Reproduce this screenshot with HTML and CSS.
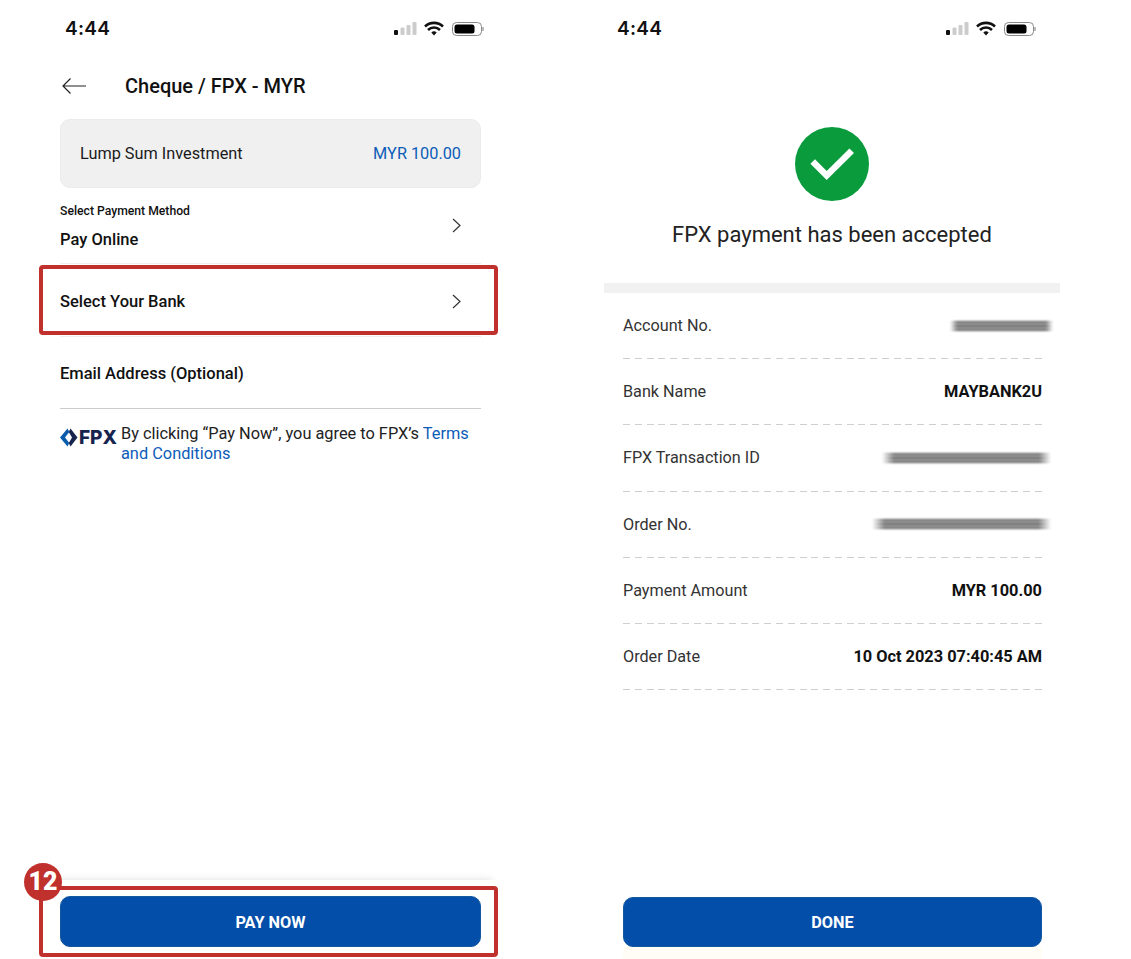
FILE: index.html
```html
<!DOCTYPE html>
<html lang="en">
<head>
  <meta charset="UTF-8">
  <title>FPX payment steps</title>
  <link rel="stylesheet" href="styles.css">
</head>
<body>

  <div class="container">

    <!-- Left phone: payment form -->
    <div class="phone">
      <div class="status-bar">
        <span class="time">4:44</span>
        <svg class="status-icons" width="90" height="18" viewBox="0 0 90 18">
          <rect x="0" y="10" width="4" height="5" rx="1" fill="#111"/>
          <rect x="6.500" y="7.500" width="4" height="7.500" rx="1" fill="#ccc"/>
          <rect x="12.500" y="5" width="4" height="10" rx="1" fill="#ccc"/>
          <rect x="18.500" y="2" width="4" height="13" rx="1" fill="#ccc"/>
          <path d="M31 6.500a13 13 0 0 1 18 0M34 10a8.600 8.600 0 0 1 12 0" fill="none" stroke="#111" stroke-width="2.600"/>
          <path d="M37.300 12.600a4 4 0 0 1 5.400 0L40 15.500z" fill="#111"/>
          <rect x="58.500" y="2.500" width="29" height="13" rx="4" fill="none" stroke="#888" stroke-width="1"/>
          <rect x="60.500" y="4.500" width="20" height="9" rx="2.500" fill="#000"/>
          <path d="M89 7v4" stroke="#999" stroke-width="1.300"/>
        </svg>
      </div>

      <div class="page-head">
        <svg class="back" width="26" height="18" viewBox="0 0 26 18">
          <path d="M25 9H2M9.500 1.500 2 9l7.500 7.500" fill="none" stroke="#222" stroke-width="1.200"/>
        </svg>
        <h1>Cheque / FPX - MYR</h1>
      </div>

      <div class="summary">
        <span>Lump Sum Investment</span>
        <span class="link">MYR 100.00</span>
      </div>

      <div class="field method">
        <div>
          <div class="small-label">Select Payment Method</div>
          <div class="field-name">Pay Online</div>
        </div>
        <svg class="chevron" width="9" height="15" viewBox="0 0 9 15"><path d="M1 1l7 6.500-7 6.500" fill="none" stroke="#333" stroke-width="1.200"/></svg>
      </div>

      <div class="field bank highlight">
        <div class="field-name">Select Your Bank</div>
        <svg class="chevron" width="9" height="15" viewBox="0 0 9 15"><path d="M1 1l7 6.500-7 6.500" fill="none" stroke="#333" stroke-width="1.200"/></svg>
      </div>

      <div class="field email">
        <div class="field-name">Email Address (Optional)</div>
      </div>

      <div class="terms">
        <div class="fpx-logo">
          <svg width="18" height="19" viewBox="0 0 18 18">
            <path d="M7.500 0 0 9l7.500 9 1.800-3.500L5 9l4.300-5.500z" fill="#0b5cab"/>
            <path d="M10.500 0 17.500 9l-7 9-1.700-3.500L12 9 8.800 3.500z" fill="#16244e"/>
          </svg>
          <span>FPX</span>
        </div>
        <p>By clicking “Pay Now”, you agree to FPX’s <span class="link">Terms</span> <span class="link">and Conditions</span></p>
      </div>

      <div class="bottom shadowed highlight">
        <span class="badge">12</span>
        <button class="main-btn">PAY NOW</button>
      </div>
    </div>

    <!-- Right phone: result -->
    <div class="phone">
      <div class="status-bar shifted">
        <span class="time">4:44</span>
        <svg class="status-icons" width="90" height="18" viewBox="0 0 90 18">
          <rect x="0" y="10" width="4" height="5" rx="1" fill="#111"/>
          <rect x="6.500" y="7.500" width="4" height="7.500" rx="1" fill="#ccc"/>
          <rect x="12.500" y="5" width="4" height="10" rx="1" fill="#ccc"/>
          <rect x="18.500" y="2" width="4" height="13" rx="1" fill="#ccc"/>
          <path d="M31 6.500a13 13 0 0 1 18 0M34 10a8.600 8.600 0 0 1 12 0" fill="none" stroke="#111" stroke-width="2.600"/>
          <path d="M37.300 12.600a4 4 0 0 1 5.400 0L40 15.500z" fill="#111"/>
          <rect x="58.500" y="2.500" width="29" height="13" rx="4" fill="none" stroke="#888" stroke-width="1"/>
          <rect x="60.500" y="4.500" width="20" height="9" rx="2.500" fill="#000"/>
          <path d="M89 7v4" stroke="#999" stroke-width="1.300"/>
        </svg>
      </div>

      <div class="result">
        <svg width="74" height="74" viewBox="0 0 74 74">
          <circle cx="37" cy="37" r="37" fill="#0a9b3c"/>
          <path d="M17.700 34.500 31.700 48.500 56.700 23.700" fill="none" stroke="#fff" stroke-width="6.500"/>
        </svg>
        <div class="result-text">FPX payment has been accepted</div>
      </div>

      <div class="band"></div>

      <div class="details">
        <div class="row"><span>Account No.</span><span class="smudge account"></span></div>
        <div class="row"><span>Bank Name</span><b>MAYBANK2U</b></div>
        <div class="row"><span>FPX Transaction ID</span><span class="smudge txn"></span></div>
        <div class="row"><span>Order No.</span><span class="smudge order"></span></div>
        <div class="row"><span>Payment Amount</span><b>MYR 100.00</b></div>
        <div class="row"><span>Order Date</span><b>10 Oct 2023 07:40:45 AM</b></div>
      </div>

      <div class="bottom cream">
        <button class="main-btn">DONE</button>
      </div>
    </div>

  </div>

</body>
</html>
```

FILE: styles.css
```css
body {
  background-color: #ffffff;
  font-family: Roboto, "Liberation Sans", sans-serif;
  color: #1a1a1a;
  margin: 0;
}

.container {
  display: flex;
  gap: 106px;
  padding-left: 42px;
  height: 959px;
  overflow: hidden;
}

.phone {
  width: 456px;
  height: 959px;
  display: flex;
  flex-direction: column;
}

/* status bar */
.status-bar {
  display: flex;
  justify-content: space-between;
  align-items: center;
  height: 56px;
  padding: 0 14px 0 23px;
}

.status-bar.shifted {
  padding: 0 24px 0 13px;
}

.time {
  font-family: Inter, sans-serif;
  font-size: 19px;
  font-weight: 600;
  letter-spacing: 0.3px;
  color: #111;
}

.status-icons {
  margin-top: 1px;
}

/* left page */
.page-head {
  display: flex;
  align-items: center;
  height: 60px;
  margin-left: 19px;
  margin-bottom: 3px;
}

.page-head h1 {
  font-size: 20px;
  font-weight: 500;
  margin: 0 0 0 38px;
  color: #111;
}

.summary {
  display: flex;
  justify-content: space-between;
  align-items: center;
  height: 69px;
  margin: 0 17px 0 18px;
  padding: 0 19px;
  box-sizing: border-box;
  background: #f0f0f0;
  border: 1px solid #ebebeb;
  border-radius: 10px;
  font-size: 16.300px;
}

.link {
  color: #0c5cb8;
}

.field {
  display: flex;
  justify-content: space-between;
  align-items: center;
  margin: 0 17px 0 18px;
  box-sizing: border-box;
}

.field .chevron {
  margin-right: 20px;
}

.small-label {
  font-size: 12.200px;
  font-weight: 500;
  margin-bottom: 12px;
  color: #111;
}

.field-name {
  font-size: 16.500px;
  font-weight: 500;
  color: #111;
}

.method {
  height: 76px;
  padding-top: 2px;
  border-bottom: 1px solid #eeeeee;
}

.method .chevron {
  margin-bottom: 2px;
}

.bank {
  height: 73px;
  padding-top: 2px;
  border-bottom: 1px solid #eeeeee;
}

.email {
  height: 72px;
  padding-top: 2px;
  border-bottom: 1px solid #cccccc;
}

/* red marker round a step */
.highlight {
  position: relative;
}

.highlight::after {
  content: "";
  position: absolute;
  border: 4px solid #c0302c;
  border-radius: 4px;
  pointer-events: none;
}

.bank::after {
  left: -21px;
  right: -17px;
  top: 1px;
  bottom: 1px;
}

.terms {
  display: flex;
  gap: 4px;
  margin: 15px 10px 0 18px;
}

.terms p {
  margin: 0;
  font-size: 16.350px;
  line-height: 20px;
  color: #222;
}

.fpx-logo {
  display: flex;
  align-items: center;
  gap: 1px;
  height: 20px;
  flex: none;
  margin-top: 3px;
}

.fpx-logo span {
  font-family: Inter, sans-serif;
  font-size: 19px;
  font-weight: 800;
  color: #16244e;
}

.bottom {
  margin-top: auto;
  padding: 0 17px 12px 18px;
}

.shadowed {
  box-shadow: 0 -6px 8px -6px #00000022;
  padding-top: 16px;
}

.shadowed::after {
  left: -3px;
  right: 0;
  top: 6px;
  bottom: 2px;
}

.cream {
  background: linear-gradient(#ffffff 0 calc(100% - 12px), #fffdf6 0);
  margin: auto 18px 0 19px;
  padding: 0 0 12px;
}

.main-btn {
  display: block;
  width: 100%;
  height: 51px;
  padding: 2px 0 0;
  background: #034ea9;
  color: #fff;
  border: 1px solid #14589f;
  border-radius: 10px;
  font-family: inherit;
  font-size: 16.300px;
  font-weight: 700;
}

.cream .main-btn {
  height: 50px;
  padding-top: 0;
}

.badge {
  position: absolute;
  left: -18px;
  top: -17px;
  z-index: 1;
  width: 38px;
  height: 38px;
  border-radius: 50%;
  background: #c0302c;
  color: #fff;
  font-size: 25px;
  font-weight: 900;
  line-height: 38px;
  text-align: center;
}

/* right page */
.result {
  display: flex;
  flex-direction: column;
  align-items: center;
  padding-top: 71px;
}

.result-text {
  font-size: 22px;
  line-height: 26px;
  margin-top: 21px;
  color: #222;
}

.band {
  height: 10px;
  margin-top: 35px;
  background: #f1f1f1;
}

.details {
  margin: 0 18px 0 19px;
}

.row {
  display: flex;
  justify-content: space-between;
  align-items: center;
  height: 66.200px;
  padding-bottom: 1px;
  box-sizing: border-box;
  font-size: 16.200px;
  color: #333;
  background: repeating-linear-gradient(90deg, #cfcfcf 0 7px, transparent 7px 11.770px) left bottom / 100% 1px no-repeat;
}

.row b {
  font-size: 16.350px;
  font-weight: 700;
  color: #111;
}

/* blurred out values */
.smudge {
  display: block;
  height: 10px;
  background:
    linear-gradient(90deg, #fff 0, transparent 7%, transparent 93%, #fff),
    repeating-linear-gradient(180deg, #666 0 2px, #a8a8a8 2px 4px);
  filter: blur(1.200px);
}

.account {
  width: 103px;
  margin-right: -11px;
}

.txn {
  width: 169px;
  margin-right: -9px;
}

.order {
  width: 179px;
  margin-right: -9px;
}
```
